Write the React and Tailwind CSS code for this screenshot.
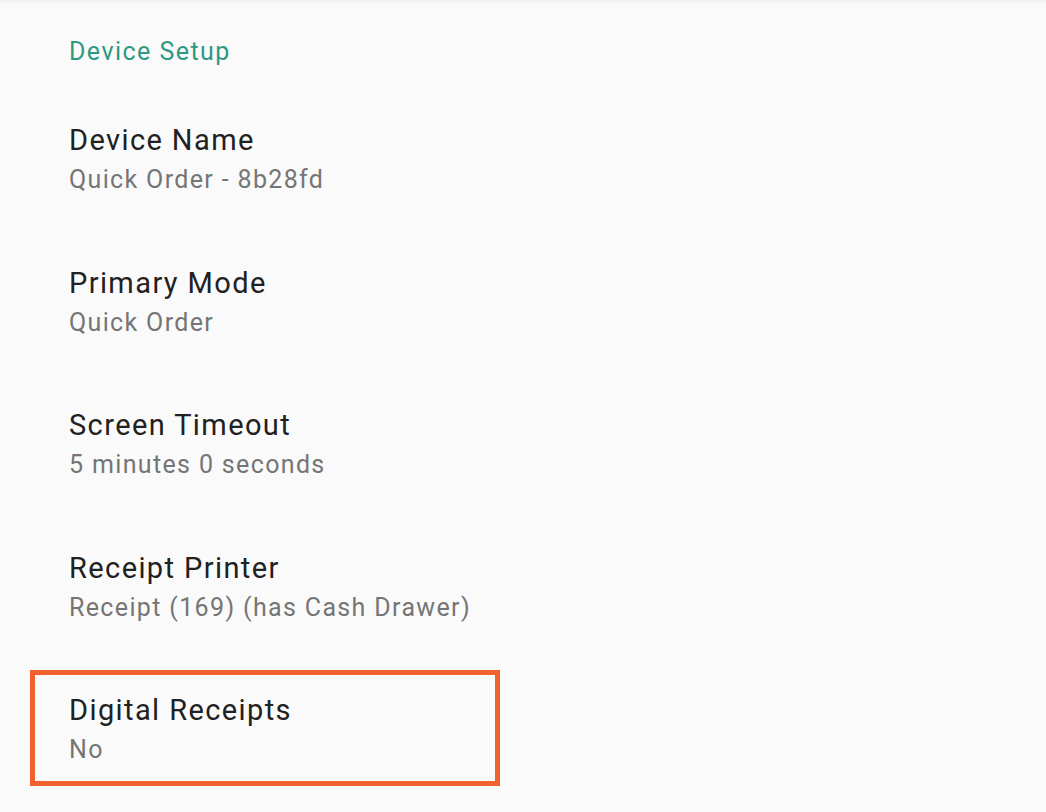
import React from "react";

const settings = [
  { title: "Device Name", value: "Quick Order - 8b28fd" },
  { title: "Primary Mode", value: "Quick Order" },
  { title: "Screen Timeout", value: "5 minutes 0 seconds" },
  { title: "Receipt Printer", value: "Receipt (169) (has Cash Drawer)" },
  { title: "Digital Receipts", value: "No", highlight: true },
];

const SettingText = ({ title, value }) => (
  <>
    <div className="text-[29px] leading-[36px] tracking-[1.4px] text-[#212121]">{title}</div>
    <div className="mt-[6px] text-[25px] leading-[32px] tracking-[1.35px] text-[#757575]">{value}</div>
  </>
);

const App = () => {
  return (
    <div
      className="relative h-[812px] w-full overflow-hidden bg-[#fafafa]"
      style={{ fontFamily: "Roboto, 'Noto Sans', sans-serif" }}
    >
      {/* soft shadow under the toolbar */}
      <div className="h-[4px] bg-gradient-to-b from-[#efefef] to-[#fafafa]" />

      <div className="pl-[69px]">
        <div className="pt-[32px] text-[25px] leading-[32px] tracking-[1.45px] text-[#2e9882]">Device Setup</div>

        <div className="mt-[32px]">
          {settings.map((item) =>
            item.highlight ? (
              <div key={item.title} className="h-[142.5px]">
                <div className="-ml-[39px] w-[470px] border-[5px] border-[#f0612e] pt-[17px] pb-[15px] pl-[34px]">
                  <SettingText title={item.title} value={item.value} />
                </div>
              </div>
            ) : (
              <div key={item.title} className="h-[142.5px] pt-[22px]">
                <SettingText title={item.title} value={item.value} />
              </div>
            )
          )}
        </div>
      </div>
    </div>
  );
};

export default App;
